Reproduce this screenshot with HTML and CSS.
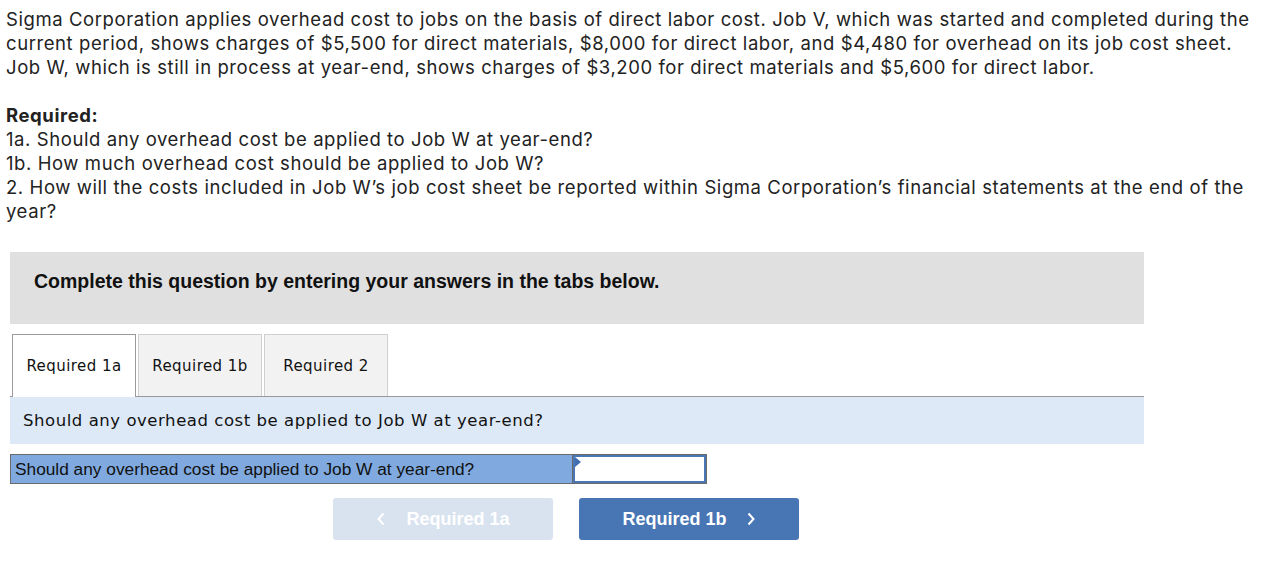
FILE: index.html
```html
<!DOCTYPE html>
<html>
<head>
<meta charset="utf-8">
<link rel="stylesheet" href="styles.css">
</head>
<body>
<div class="question">
  <p class="intro">Sigma Corporation applies overhead cost to jobs on the basis of direct labor cost. Job V, which was started and completed during the current period, shows charges of $5,500 for direct materials, $8,000 for direct labor, and $4,480 for overhead on its job cost sheet. Job W, which is still in process at year-end, shows charges of $3,200 for direct materials and $5,600 for direct labor.</p>
  <div class="required">
    <strong>Required:</strong><br>
    1a. Should any overhead cost be applied to Job W at year-end?<br>
    1b. How much overhead cost should be applied to Job W?<br>
    2. How will the costs included in Job W’s job cost sheet be reported within Sigma Corporation’s financial statements at the end of the year?
  </div>
</div>
<div class="work">
  <div class="banner">Complete this question by entering your answers in the tabs below.</div>
  <div class="tabs">
    <div class="tab active">Required 1a</div>
    <div class="tab">Required 1b</div>
    <div class="tab">Required 2</div>
  </div>
  <div class="panel">Should any overhead cost be applied to Job W at year-end?</div>
  <div class="answer-row">
    <div class="label-cell">Should any overhead cost be applied to Job W at year-end?</div>
    <div class="input-cell"><span class="marker"></span></div>
  </div>
  <div class="nav">
    <button class="btn prev"><svg class="chev" width="10" height="14" viewBox="0 0 10 14"><path d="M7.5 1.5 L2.5 7 L7.5 12.5" fill="none" stroke="currentColor" stroke-width="2"/></svg>Required 1a</button>
    <button class="btn next">Required 1b<svg class="chev right" width="10" height="14" viewBox="0 0 10 14"><path d="M2.5 1.5 L7.5 7 L2.5 12.5" fill="none" stroke="currentColor" stroke-width="2"/></svg></button>
  </div>
</div>
</body>
</html>
```
FILE: styles.css
```css
html, body { margin: 0; padding: 0; background: #fff; }
body { padding: 7px 6px 0 6px; }
.question {
  font-family: "Inter", "Open Sans", sans-serif;
  font-size: 18.5px;
  letter-spacing: 0.58px;
  line-height: 24px;
  color: #222;
  width: 1250px;
}
.intro { margin: 0; }
.required { margin-top: 24px; }
.required strong { font-weight: 700; }
.work { margin-left: 4px; width: 1134px; margin-top: 29px; }
.banner {
  background: #e0e0e0;
  height: 72px;
  box-sizing: border-box;
  padding: 19px 24px 0;
  font-family: "Liberation Sans", Arial, sans-serif;
  font-weight: 700;
  font-size: 19.5px;
  line-height: 20px;
  color: #111;
}
.tabs {
  display: flex;
  gap: 2px;
  margin-top: 10px;
  padding-left: 2px;
  border-bottom: 1px solid #999;
  height: 62px;
}
.tab {
  width: 124px;
  box-sizing: border-box;
  height: 62px;
  border: 1px solid #cfcfcf;
  border-bottom: none;
  background: #f2f2f2;
  font-family: "DejaVu Sans", Verdana, sans-serif;
  font-size: 15px;
  letter-spacing: 0.45px;
  color: #111;
  display: flex;
  align-items: center;
  justify-content: center;
}
.tab.active {
  background: #fff;
  border-color: #9a9a9a;
  height: 63px;
  position: relative;
  z-index: 1;
}
.panel {
  background: #dde9f7;
  height: 47px;
  box-sizing: border-box;
  padding: 0 13px;
  display: flex;
  align-items: center;
  font-family: "DejaVu Sans", Verdana, sans-serif;
  font-size: 16.5px;
  letter-spacing: 0.55px;
  color: #111;
}
.answer-row {
  display: flex;
  margin-top: 10px;
  height: 30px;
}
.label-cell {
  width: 563px;
  box-sizing: border-box;
  background: #80aadf;
  border: 1px solid #6a6a6a;
  padding: 0 4px;
  font-family: "Liberation Sans", Arial, sans-serif;
  font-size: 17.3px;
  line-height: 28px;
  color: #111;
}
.input-cell {
  width: 134px;
  box-sizing: border-box;
  border: 1px solid #6a6a6a;
  border-left: none;
  box-shadow: inset 0 0 0 2px #4a77b4;
  background: #fff;
  position: relative;
}
.marker {
  position: absolute;
  left: 2px;
  top: 2px;
  width: 0; height: 0;
  border-top: 5px solid transparent;
  border-bottom: 5px solid transparent;
  border-left: 6px solid #3f6fb0;
}
.nav {
  display: flex;
  gap: 26px;
  margin-top: 14px;
  padding-left: 323px;
}
.btn {
  width: 220px;
  height: 42px;
  border: none;
  border-radius: 3px;
  font-family: "Liberation Sans", Arial, sans-serif;
  font-weight: 700;
  font-size: 18px;
  color: #fff;
  display: flex;
  align-items: center;
  justify-content: center;
  padding: 0;
}
.btn.prev { background: #d9e3ef; color: #fff; }
.btn.next { background: #4876b4; }
.chev { margin-right: 20px; }
.chev.right { margin-right: 0; margin-left: 19px; }
```
